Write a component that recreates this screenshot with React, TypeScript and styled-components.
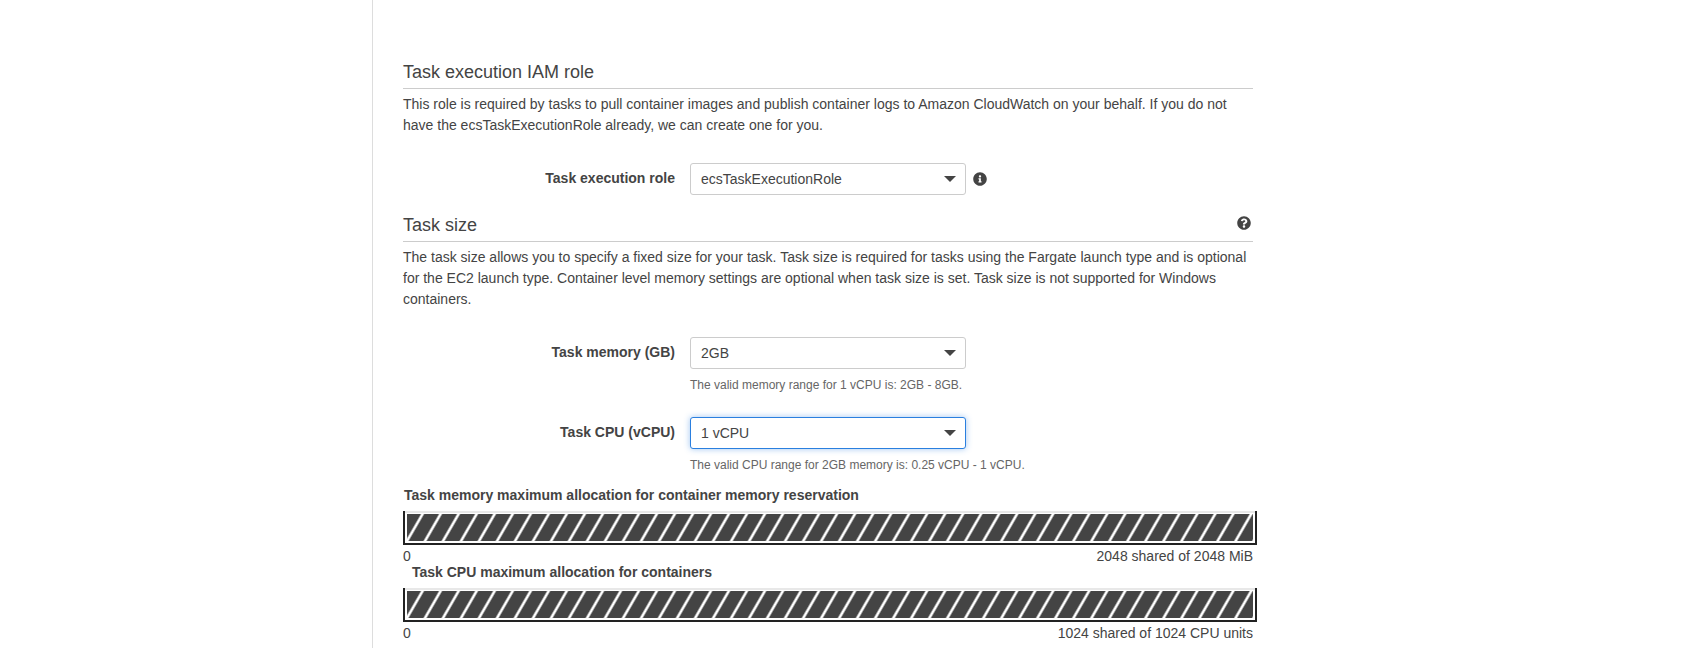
import { createGlobalStyle } from "styled-components";
import styled from "styled-components";
import { FaInfoCircle, FaQuestionCircle } from "react-icons/fa";

const GlobalStyle = createGlobalStyle`
    html, body {
        margin:0;
        padding:0;
        background-color:white;
    }
    body {
        font-family:"Liberation Sans", Arial, sans-serif;
        font-size:14px;
        line-height:21px;
        color:#444;
    }
`;

const Page = styled.div`
    display:flex;
    height:648px;
    overflow:hidden;
`;
//left rail
const Rail = styled.aside`
    width:372px;
    flex-shrink:0;
    border-right:1px solid #ddd;
`;
const Content = styled.main`
    width:850px;
    margin-left:30px;
    padding-top:58px;
`;
//section head
const SectionHead = styled.div<{ $top?: number }>`
    display:flex;
    justify-content:space-between;
    align-items:center;
    height:28px;
    padding-bottom:2px;
    margin-top:${(p) => p.$top ?? 0}px;
    border-bottom:1px solid #ccc;
    font-size:18px;
`;
const HeadIcon = styled.span`
    display:flex;
    font-size:14px;
    color:#444;
    margin:-5px 2px 0 0;
`;
const Description = styled.p`
    margin:5px 0 0;
`;
//form rows
const Row = styled.div<{ $top: number }>`
    display:grid;
    grid-template-columns:272px 276px auto;
    column-gap:15px;
    margin-top:${(p) => p.$top}px;
`;
const Label = styled.label`
    text-align:right;
    font-weight:700;
    line-height:31px;
`;
const Select = styled.div<{ $focused?: boolean }>`
    display:flex;
    justify-content:space-between;
    align-items:center;
    box-sizing:border-box;
    height:32px;
    padding:0 9px 0 10px;
    background-color:white;
    border:1px solid ${(p) => (p.$focused ? "#2a7fdf" : "#ccc")};
    border-radius:3px;
    box-shadow:${(p) => (p.$focused ? "0 0 6px rgba(42,127,223,.45)" : "none")};
`;
const Caret = styled.span`
    width:0;
    height:0;
    border-left:6px solid transparent;
    border-right:6px solid transparent;
    border-top:6px solid #444;
`;
const InfoIcon = styled.span`
    display:flex;
    align-items:center;
    font-size:14px;
    margin-left:-8px;
    color:#444;
`;
const Hint = styled.div`
    grid-column:2 / span 2;
    margin-top:7px;
    font-size:12px;
    line-height:18px;
    color:#666;
`;
//allocation bars
const BarTitle = styled.div<{ $indent: number; $top: number }>`
    font-weight:700;
    line-height:16px;
    padding-left:${(p) => p.$indent}px;
    margin-top:${(p) => p.$top}px;
`;
const Bar = styled.div`
    box-sizing:border-box;
    height:34px;
    margin:8px -4px 0 0;
    border:2px solid #222;
    border-top:none;
    padding:3px 2px 2px;
    box-shadow:inset 0 2px 0 #e8e8e8;
`;
const Stripes = styled.div`
    height:100%;
    background-image:repeating-linear-gradient(
        120deg,
        #444 0,
        #444 11.4px,
        white 13px,
        white 14px,
        #444 15.6px
    );
`;
const Scale = styled.div`
    display:flex;
    justify-content:space-between;
    margin-top:3px;
    line-height:16px;
`;

function Allocation({ title, indent, top, max }: { title: string; indent: number; top: number; max: string }) {
    return (
        <>
            <BarTitle $indent={indent} $top={top}>{title}</BarTitle>
            <Bar>
                <Stripes />
            </Bar>
            <Scale>
                <span>0</span>
                <span>{max}</span>
            </Scale>
        </>
    );
}

function App() {
    return (
        <Page>
            <GlobalStyle />
            <Rail />
            <Content>
                <SectionHead>Task execution IAM role</SectionHead>
                <Description>
                    This role is required by tasks to pull container images and publish container logs to Amazon CloudWatch on your behalf. If you do not have the ecsTaskExecutionRole already, we can create one for you.
                </Description>
                <Row $top={27}>
                    <Label>Task execution role</Label>
                    <Select>
                        ecsTaskExecutionRole
                        <Caret />
                    </Select>
                    <InfoIcon><FaInfoCircle /></InfoIcon>
                </Row>
                <SectionHead $top={16}>
                    Task size
                    <HeadIcon><FaQuestionCircle /></HeadIcon>
                </SectionHead>
                <Description>
                    The task size allows you to specify a fixed size for your task. Task size is required for tasks using the Fargate launch type and is optional for the EC2 launch type. Container level memory settings are optional when task size is set. Task size is not supported for Windows containers.
                </Description>
                <Row $top={27}>
                    <Label>Task memory (GB)</Label>
                    <Select>
                        2GB
                        <Caret />
                    </Select>
                    <Hint>The valid memory range for 1 vCPU is: 2GB - 8GB.</Hint>
                </Row>
                <Row $top={23}>
                    <Label>Task CPU (vCPU)</Label>
                    <Select $focused>
                        1 vCPU
                        <Caret />
                    </Select>
                    <Hint>The valid CPU range for 2GB memory is: 0.25 vCPU - 1 vCPU.</Hint>
                </Row>
                <Allocation
                    title="Task memory maximum allocation for container memory reservation"
                    indent={1}
                    top={13}
                    max="2048 shared of 2048 MiB"
                />
                <Allocation
                    title="Task CPU maximum allocation for containers"
                    indent={9}
                    top={0}
                    max="1024 shared of 1024 CPU units"
                />
            </Content>
        </Page>
    );
}

export default App;
